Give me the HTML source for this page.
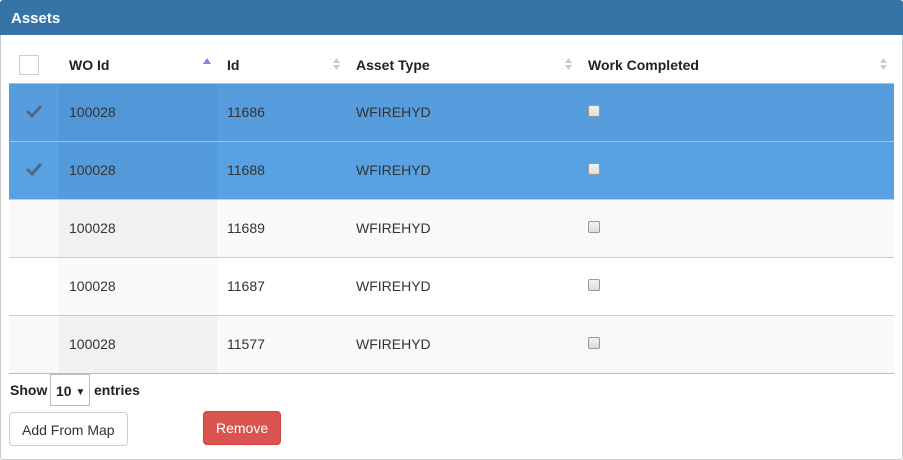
<!DOCTYPE html>
<html><head><style>
*{margin:0;padding:0;box-sizing:border-box}
body{width:903px;height:460px;background:#fff;font-family:"Liberation Sans",sans-serif;font-size:14px;color:#333;position:relative;overflow:hidden}
.panel{position:absolute;left:0;top:0;width:903px;height:460px;border:1px solid #c9c9c9;border-radius:3px}
.hdr{position:absolute;left:0;top:0;width:903px;height:35px;background:#3674a8;color:#fff;font-weight:bold;font-size:15px;padding:10px 0 0 11px;border-radius:3px 3px 0 0}
.a{position:absolute}
.th{font-weight:bold;top:57px;font-size:14px;color:#222}
.row{position:absolute;left:9px;width:885px;height:58px;border-top:1px solid #ccc}
.c{position:absolute;top:0;height:57px}
.t{position:absolute;top:20px}
.cb{position:absolute;left:579px;top:21px;width:12px;height:12px;border:1px solid #999;border-radius:2px;background:linear-gradient(#f2f2f2,#ddd)}
.srt{position:absolute;top:57px;width:7px;height:14px}
</style></head><body>
<div class="panel"></div>
<div class="hdr">Assets</div>
<div class="a" style="left:19px;top:55px;width:20px;height:20px;border:1px solid #ccc"></div>
<div class="a th" style="left:69px">WO Id</div>
<div class="a" style="left:203px;top:58px;width:0;height:0;border-left:4px solid transparent;border-right:4px solid transparent;border-bottom:6px solid #8a7ee0"></div>
<div class="a th" style="left:227px">Id</div>
<div class="a th" style="left:356px">Asset Type</div>
<div class="a th" style="left:588px">Work Completed</div>
<svg class="srt" style="left:333px" viewBox="0 0 7 14"><path d="M0 6L3.5 1L7 6Z M0 8L3.5 13L7 8Z" fill="#ccc"/></svg>
<svg class="srt" style="left:565px" viewBox="0 0 7 14"><path d="M0 6L3.5 1L7 6Z M0 8L3.5 13L7 8Z" fill="#ccc"/></svg>
<svg class="srt" style="left:880px" viewBox="0 0 7 14"><path d="M0 6L3.5 1L7 6Z M0 8L3.5 13L7 8Z" fill="#ccc"/></svg>

<div class="row" style="top:83px;background:#579ddd;border-top:1px solid #bbb">
 <div class="c" style="left:50px;width:158px;background:#5197d7"></div>
 <svg class="a" style="left:16px;top:20px" width="18" height="14" viewBox="0 0 18 14"><path d="M2 7L7 12L16 2" stroke="#4a6a8a" stroke-width="3" fill="none"/></svg>
 <div class="t" style="left:60px">100028</div><div class="t" style="left:218px">11686</div><div class="t" style="left:347px">WFIREHYD</div><div class="cb"></div></div>
<div class="row" style="top:141px;background:#58a1e3;border-top:1px solid #9cc4ea">
 <div class="c" style="left:50px;width:158px;background:#539bdb"></div>
 <svg class="a" style="left:16px;top:20px" width="18" height="14" viewBox="0 0 18 14"><path d="M2 7L7 12L16 2" stroke="#4a6a8a" stroke-width="3" fill="none"/></svg>
 <div class="t" style="left:60px">100028</div><div class="t" style="left:218px">11688</div><div class="t" style="left:347px">WFIREHYD</div><div class="cb"></div></div>
<div class="row" style="top:199px;background:#f9f9f9">
 <div class="c" style="left:50px;width:158px;background:#f1f1f1"></div>
 <div class="t" style="left:60px">100028</div><div class="t" style="left:218px">11689</div><div class="t" style="left:347px">WFIREHYD</div><div class="cb"></div></div>
<div class="row" style="top:257px;background:#fff">
 <div class="c" style="left:50px;width:158px;background:#fafafa"></div>
 <div class="t" style="left:60px">100028</div><div class="t" style="left:218px">11687</div><div class="t" style="left:347px">WFIREHYD</div><div class="cb"></div></div>
<div class="row" style="top:315px;background:#f9f9f9;height:59px;border-bottom:1px solid #bbb">
 <div class="c" style="left:50px;width:158px;background:#f1f1f1"></div>
 <div class="t" style="left:60px">100028</div><div class="t" style="left:218px">11577</div><div class="t" style="left:347px">WFIREHYD</div><div class="cb"></div></div>

<div class="a" style="left:10px;top:382px;font-weight:bold;color:#222">Show</div>
<div class="a" style="left:50px;top:374px;width:40px;height:32px;border:1px solid #bbb;padding:8px 0 0 5px;font-weight:bold;color:#222">10 <span style="font-size:10px;position:relative;top:-1px">▼</span></div>
<div class="a" style="left:94px;top:382px;font-weight:bold;color:#222">entries</div>
<div class="a" style="left:9px;top:412px;width:119px;height:34px;border:1px solid #ccc;border-radius:4px;padding:9px 0 0 12px;color:#333">Add From Map</div>
<div class="a" style="left:203px;top:411px;width:78px;height:34px;border:1px solid #d43f3a;background:#d9534f;border-radius:4px;padding:8px 0 0 12px;color:#fff">Remove</div>
</body></html>
